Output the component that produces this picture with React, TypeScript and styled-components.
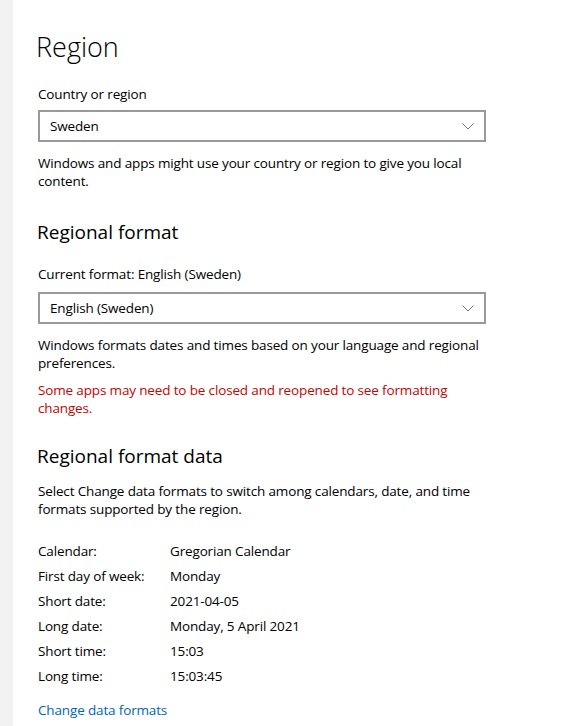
import * as React from 'react';
import styled, { createGlobalStyle } from 'styled-components';

const GlobalStyle = createGlobalStyle`
    html, body {
        margin: 0;
        padding: 0;
        background: #ffffff;
    }
    body {
        font-family: 'Segoe UI', 'Open Sans', 'Noto Sans', sans-serif;
        color: #000000;
        -webkit-font-smoothing: antialiased;
    }
`;

const FORMAT_DATA = [
    { label: 'Calendar:', value: 'Gregorian Calendar' },
    { label: 'First day of week:', value: 'Monday' },
    { label: 'Short date:', value: '2021-04-05' },
    { label: 'Long date:', value: 'Monday, 5 April 2021' },
    { label: 'Short time:', value: '15:03' },
    { label: 'Long time:', value: '15:03:45' },
];

const Chevron = () => (
    <svg width='12' height='7' viewBox='0 0 12 7' fill='none'>
        <path d='M0.5 0.5 L6 6 L11.5 0.5' stroke='#767676' strokeWidth='1' />
    </svg>
);

const Dropdown = ({ value, top }: { value: string; top: number }) => (
    <Select $top={top}>
        <span>{value}</span>
        <Chevron />
    </Select>
);

export default function App() {
    return (
        <Page>
            <GlobalStyle />
            <Rail />
            <Content>
                <Title>Region</Title>

                <Label $top={19}>Country or region</Label>
                <Dropdown value='Sweden' top={6} />
                <Paragraph $top={12}>
                    Windows and apps might use your country or region to give you local content.
                </Paragraph>

                <Heading $top={28}>Regional format</Heading>
                <Label $top={18}>Current format: English (Sweden)</Label>
                <Dropdown value='English (Sweden)' top={8} />
                <Paragraph $top={12}>
                    Windows formats dates and times based on your language and regional preferences.
                </Paragraph>
                <Paragraph $top={9} $warning>
                    Some apps may need to be closed and reopened to see formatting changes.
                </Paragraph>

                <Heading $top={25}>Regional format data</Heading>
                <Paragraph $top={12}>
                    Select Change data formats to switch among calendars, date, and time formats supported by the region.
                </Paragraph>

                <DataGrid>
                    {FORMAT_DATA.map((row) => (
                        <React.Fragment key={row.label}>
                            <DataCell>{row.label}</DataCell>
                            <DataCell>{row.value}</DataCell>
                        </React.Fragment>
                    ))}
                </DataGrid>

                <Link href='#'>Change data formats</Link>
            </Content>
        </Page>
    );
}

const Page = styled.div`
    display: flex;
    min-height: 726px;
    background: #ffffff;
`;

const Rail = styled.div`
    width: 13px;
    flex-shrink: 0;
    background: #f2f2f2;
`;

const Content = styled.div`
    display: flex;
    flex-direction: column;
    align-items: flex-start;
    padding-left: 25px;
    width: 448px;
    font-size: 13.5px;
    letter-spacing: -0.15px;
`;

const Title = styled.h1`
    margin: 29px 0 0 -2px;
    font-size: 27px;
    line-height: 36px;
    font-weight: 300;
    letter-spacing: 0;
`;

const Heading = styled.h2<{ $top: number }>`
    margin: ${(p) => p.$top}px 0 0 -1px;
    font-size: 19px;
    line-height: 28px;
    font-weight: 400;
    letter-spacing: 0;
`;

const Label = styled.div<{ $top: number }>`
    margin-top: ${(p) => p.$top}px;
    line-height: 20px;
`;

const Select = styled.div<{ $top: number }>`
    margin-top: ${(p) => p.$top}px;
    box-sizing: border-box;
    width: 448px;
    height: 32px;
    border: 2px solid #999999;
    display: flex;
    align-items: center;
    justify-content: space-between;
    padding: 0 10px 0 10px;
`;

const Paragraph = styled.p<{ $top: number; $warning?: boolean }>`
    margin: ${(p) => p.$top}px 0 0;
    line-height: 18px;
    width: 448px;
    color: ${(p) => (p.$warning ? '#c50500' : '#000000')};
`;

const DataGrid = styled.div`
    margin-top: 20px;
    display: grid;
    grid-template-columns: 132px auto;
    grid-auto-rows: 25px;
    align-items: center;
`;

const DataCell = styled.div`
    line-height: 20px;
`;

const Link = styled.a`
    margin-top: 12px;
    line-height: 20px;
    color: #0067b8;
    text-decoration: none;
`;
